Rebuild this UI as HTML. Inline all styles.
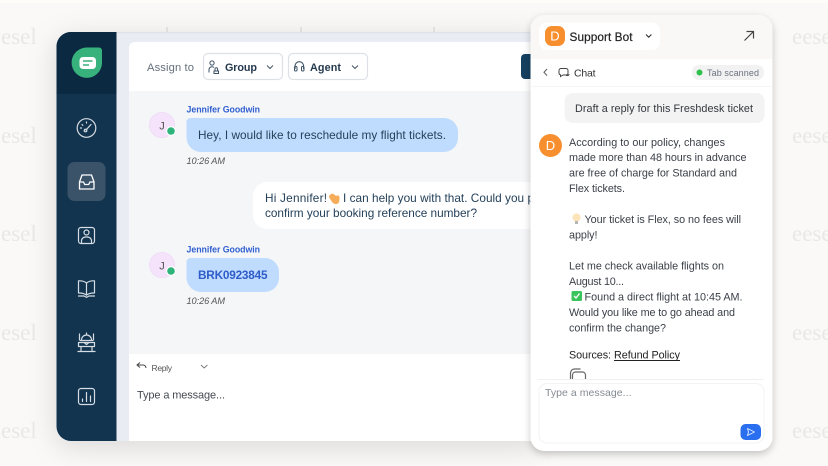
<!DOCTYPE html>
<html><head><meta charset="utf-8"><style>
html,body{margin:0;padding:0;width:828px;height:466px;overflow:hidden;background:#faf9f7}
svg{display:block}
text{font-family:"Liberation Sans",sans-serif;white-space:pre}
.wm{font-family:"Liberation Serif",serif;font-size:23px;fill:#e8e8e6}
.m{font-size:11.800px;fill:#25415a}
.n{font-size:8.800px;fill:#2f5fd0;font-weight:bold}
.t{font-size:9.200px;fill:#555;font-style:italic}
.i{fill:none;stroke:#d5dce3;stroke-width:1.200;stroke-linecap:round;stroke-linejoin:round}
</style></head><body>
<svg width="828" height="466" viewBox="0 0 828 466" xmlns="http://www.w3.org/2000/svg">
<defs>
<filter id="s1" x="-20%" y="-20%" width="140%" height="140%"><feDropShadow dx="0" dy="6" stdDeviation="14" flood-color="#000" flood-opacity=".13"/></filter>
<filter id="s2" x="-20%" y="-20%" width="140%" height="140%"><feDropShadow dx="0" dy="3" stdDeviation="4" flood-color="#000" flood-opacity=".22"/></filter>
<clipPath id="c1"><path d="M129 48a6 6 0 0 1 6-6H540V441H129Z"/></clipPath>
<clipPath id="c2"><rect x="560" y="360" width="40" height="19"/></clipPath>
</defs>
<rect width="828" height="466" fill="#faf9f7"/>
<rect width="828" height="3" fill="#fdfcf8"/>
<g><text class="wm" x="1" y="44">esel</text><text class="wm" x="1" y="143">esel</text><text class="wm" x="1" y="241">esel</text><text class="wm" x="1" y="340">esel</text><text class="wm" x="1" y="438">esel</text>
<text class="wm" x="792" y="44">eese</text><text class="wm" x="792" y="143">eese</text><text class="wm" x="792" y="241">eese</text><text class="wm" x="792" y="340">eese</text><text class="wm" x="792" y="438">eese</text></g>
<path d="M167 27v5M301 27v5M434 27v5" stroke="#dcdcda" stroke-width="1.200"/>

<!-- main card -->
<path d="M70 32H540V441H70a14 14 0 0 1-14-14V46a14 14 0 0 1 14-14Z" fill="#e9edf3" filter="url(#s1)"/>
<rect x="116" y="32" width="424" height="1.200" fill="#dfe2e6"/>
<path d="M71 32H116.500V441H71a14.500 14.500 0 0 1-14.500-14.500V46.500A14.500 14.500 0 0 1 71 32Z" fill="#12344f"/>
<path d="M71 32H116.500V94H56.500V46.500A14.500 14.500 0 0 1 71 32Z" fill="#0b2a42"/>
<g clip-path="url(#c1)">
<rect x="129" y="42" width="411" height="49" fill="#fff"/>
<rect x="129" y="91" width="411" height="263" fill="#f5f6f8"/>
<rect x="129" y="354" width="411" height="87" fill="#fff"/>
</g>
<!-- logo -->
<path d="M87 47.500H99a3 3 0 0 1 3 3V63a15.200 15.200 0 1 1-15-15.500Z" fill="#38b27c"/>
<rect x="79.500" y="57" width="16.500" height="12" rx="3.500" fill="#fff"/>
<path d="M83 61h9.500M83 65h6" stroke="#38b27c" stroke-width="1.500"/>
<!-- gauge -->
<circle cx="86.500" cy="128" r="9.300" class="i"/>
<path class="i" d="M86 130l5-5.500M82 124.500l.8.8M86.500 122v1M80.500 128h1"/><circle cx="85.500" cy="130.500" r="1.300" class="i"/>
<!-- inbox -->
<rect x="67.500" y="162" width="38" height="39" rx="7" fill="#3a5369"/>
<path d="M79.500 182l2.500-7h9.500l2.500 7v7h-14.500Z" fill="none" stroke="#fff" stroke-width="1.300" stroke-linejoin="round"/>
<path d="M79.500 182h4l1.200 2.500h4l1.200-2.500h4" fill="none" stroke="#fff" stroke-width="1.300" stroke-linejoin="round"/>
<!-- contact -->
<rect x="78.500" y="227.500" width="16" height="16" rx="2.500" class="i"/>
<circle cx="86.500" cy="232.500" r="2.500" class="i"/>
<path class="i" d="M81.500 243.500v-3a4 4 0 0 1 4-3.500h2a4 4 0 0 1 4 3.500v3"/>
<!-- book -->
<path class="i" d="M86.500 283c-2-1.800-5-2.300-8-2.200v12.200c3-.1 6 .4 8 2.200 2-1.800 5-2.300 8-2.200v-12.200c-3-.1-6 .4-8 2.200ZM86.500 283v12M78.500 296h5.500l2.500 1.300 2.500-1.300h5.500"/>
<!-- helmet -->
<path class="i" stroke-width="1" d="M81.500 340a5 5 0 0 1 10 0M80.500 340.500h12M79.500 334v6M93.500 334v6M78.500 342.500h16v4h-16ZM81 346.500v4M92 346.500v4M78 351.500h17M84 342.500l2.500 2 2.500-2M86.500 333v2"/>
<!-- chart -->
<rect x="78.500" y="388.500" width="16" height="16" rx="2.500" class="i"/>
<path class="i" d="M82.500 399v2.500M86.500 392.500v9M90.500 396v5.500"/>

<!-- header row -->
<text x="147" y="71" font-size="11.200" fill="#66707c" textLength="47">Assign to</text>
<rect x="203.500" y="53.500" width="79" height="26" rx="4.500" fill="#fff" stroke="#dde1e6" stroke-width="1.200"/>
<circle cx="212" cy="63" r="2.100" fill="none" stroke="#3d5266"/><path d="M209 72.500v-3a3 3 0 0 1 5-2M214 71h4.500v2.500H214ZM215 71v-2a1.300 1.300 0 0 1 2.600 0v2" fill="none" stroke="#3d5266"/>
<text x="225" y="71" font-size="10.800" font-weight="bold" fill="#24394e" textLength="32">Group</text>
<path d="M267 65.500l3 3 3-3" fill="none" stroke="#4a5a6a" stroke-width="1.100"/>
<rect x="288.500" y="53.500" width="79" height="26" rx="4.500" fill="#fff" stroke="#dde1e6" stroke-width="1.200"/>
<path d="M295 69v-3a4.300 4.300 0 0 1 8.600 0v3" fill="none" stroke="#3d5266" stroke-width="1.100"/><rect x="294.500" y="66.500" width="2.500" height="4.500" rx="1" fill="none" stroke="#3d5266"/><rect x="301.500" y="66.500" width="2.500" height="4.500" rx="1" fill="none" stroke="#3d5266"/>
<text x="310" y="71" font-size="10.800" font-weight="bold" fill="#24394e" textLength="31">Agent</text>
<path d="M352 65.500l3 3 3-3" fill="none" stroke="#4a5a6a" stroke-width="1.100"/>
<path d="M525 54H535V79H525a4 4 0 0 1-4-4V58a4 4 0 0 1 4-4Z" fill="#15405f"/>

<!-- messages -->
<circle cx="162" cy="125" r="12.500" fill="#f5e3fb" stroke="#f0dcf6"/>
<text x="162" y="129.500" font-size="11" fill="#555" text-anchor="middle">J</text>
<circle cx="171" cy="131" r="5" fill="#fff"/><circle cx="171" cy="131" r="3.800" fill="#2eb37a"/>
<text class="n" x="186.500" y="112.500" textLength="73.500">Jennifer Goodwin</text>
<path d="M190.500 118H444a14 14 0 0 1 14 14v6a14 14 0 0 1-14 14H201a14.500 14.500 0 0 1-14.500-14.500V122a4 4 0 0 1 4-4Z" fill="#bfdcff"/>
<text class="m" x="198" y="139" textLength="248">Hey, I would like to reschedule my flight tickets.</text>
<text class="t" x="186.500" y="164" textLength="38.500">10:26 AM</text>

<path d="M540 182H267a14 14 0 0 0-14 14V215a14 14 0 0 0 14 14H540Z" fill="#fff"/>
<text class="m" x="265" y="202" textLength="62">Hi Jennifer!</text>
<path d="M331 194c2-1 3 .5 4.500 1.500s2.500-1 3.500.5.500 5.500-.5 7-4.500 1.500-6-.5-3.500-5-3.500-6 1.500-2 2-2.500Z" fill="#f6ad5b"/>
<text class="m" x="343" y="202" textLength="191">I can help you with that. Could you p</text>
<text class="m" x="265" y="217" textLength="212">confirm your booking reference number?</text>

<circle cx="162" cy="265" r="12.500" fill="#f5e3fb" stroke="#f0dcf6"/>
<text x="162" y="269.500" font-size="11" fill="#555" text-anchor="middle">J</text>
<circle cx="171" cy="271" r="5" fill="#fff"/><circle cx="171" cy="271" r="3.800" fill="#2eb37a"/>
<text class="n" x="186.500" y="252.500" textLength="73.500">Jennifer Goodwin</text>
<path d="M190.500 258H265a14 14 0 0 1 14 14v6a14 14 0 0 1-14 14H201a14.500 14.500 0 0 1-14.500-14.500V262a4 4 0 0 1 4-4Z" fill="#bfdcff"/>
<text x="198" y="279" font-size="11.800" font-weight="bold" fill="#2f5cc8" textLength="69.500">BRK0923845</text>
<text class="t" x="186.500" y="304" textLength="38.500">10:26 AM</text>

<!-- reply -->
<path d="M140 362.500l-3 2.500 3 2.500M137 365h6a3 3 0 0 1 3 3" fill="none" stroke="#444" stroke-width="1"/>
<text x="151.500" y="371" font-size="8.500" fill="#555" textLength="20.500">Reply</text>
<path d="M201 365l3.200 3 3.200-3" fill="none" stroke="#777" stroke-width=".9"/>
<text x="137" y="398.500" font-size="11" fill="#454a52" textLength="88">Type a message...</text>

<!-- right panel -->
<rect x="530.500" y="15" width="242" height="436" rx="14" fill="#fff" filter="url(#s2)"/>
<path d="M544.500 15H758.500a14 14 0 0 1 14 14V59H530.500V29a14 14 0 0 1 14-14Z" fill="#f9f8f6"/>
<rect x="539" y="22.500" width="121" height="27.500" rx="8" fill="#fff"/>
<rect x="545" y="26" width="20" height="20" rx="7" fill="#f78f2e"/>
<text x="555" y="40.500" font-size="13" fill="#fff" text-anchor="middle">D</text>
<text x="569.500" y="41" font-size="11.800" fill="#222" stroke="#222" stroke-width=".2" textLength="63">Support Bot</text>
<path d="M646 34.500l2.700 2.700 2.700-2.700" fill="none" stroke="#333" stroke-width="1.100"/>
<path d="M744.500 40.500l9-9M746.500 31.500h7v7" fill="none" stroke="#444" stroke-width="1.200"/>

<path d="M547 69l-3 3.300 3 3.300" fill="none" stroke="#666" stroke-width="1.100"/>
<path d="M561 68.500h5a2 2 0 0 1 2 2v2.500a2 2 0 0 1-2 2h-3l-2.500 1.500v-1.600a2 2 0 0 1-1.500-1.900v-2.500a2 2 0 0 1 2-2Z M566 75.500h1.500a1.500 1.500 0 0 0 1.500-1.500" fill="none" stroke="#444" stroke-width="1"/>
<text x="574" y="76.500" font-size="10.500" fill="#333" textLength="21.500">Chat</text>
<rect x="692" y="65" width="72" height="15" rx="7" fill="#f1f2f1"/>
<circle cx="699.500" cy="72.500" r="3" fill="#2fc04d"/>
<text x="707" y="76" font-size="9" fill="#6b7280" textLength="52">Tab scanned</text>
<rect x="531" y="86" width="241" height="1" fill="#f6f6f6"/>

<rect x="564.500" y="93" width="200" height="30" rx="8" fill="#f3f3f4"/>
<text x="575" y="112" font-size="10.800" fill="#33373d" textLength="178">Draft a reply for this Freshdesk ticket</text>
<circle cx="550.500" cy="145.500" r="11.500" fill="#f78f2e"/>
<text x="550.500" y="150" font-size="13" fill="#fff" text-anchor="middle">D</text>
<g font-size="10.800" fill="#3a3f47">
<text x="569" y="146" textLength="156">According to our policy, changes</text>
<text x="569" y="161" textLength="177.500">made more than 48 hours in advance</text>
<text x="569" y="176.500" textLength="168">are free of charge for Standard and</text>
<text x="569" y="192" textLength="56">Flex tickets.</text>
<text x="584.500" y="223" textLength="156.500">Your ticket is Flex, so no fees will</text>
<text x="569" y="238.500" textLength="28.500">apply!</text>
<text x="569" y="269.500" textLength="155">Let me check available flights on</text>
<text x="569" y="285" textLength="55">August 10...</text>
<text x="584.500" y="300.500" textLength="158">Found a direct flight at 10:45 AM.</text>
<text x="569" y="316" textLength="166">Would you like me to go ahead and</text>
<text x="569" y="331.500" textLength="97">confirm the change?</text>
<text x="569" y="358.500" fill="#222" textLength="42">Sources:</text>
<text x="614" y="358.500" fill="#222" textLength="66">Refund Policy</text>
</g>
<rect x="614" y="360" width="66" height="1" fill="#222"/>
<circle cx="576.500" cy="217.500" r="4" fill="#fde3b8"/><rect x="575" y="221" width="3" height="3" fill="#b5b5b5"/>
<rect x="571.500" y="291" width="10.500" height="10" rx="1.500" fill="#3cc45c"/>
<path d="M574 296l2 2 3.500-4.500" fill="none" stroke="#fff" stroke-width="1.300"/>
<g clip-path="url(#c2)" fill="none" stroke="#666" stroke-width="1.200"><rect x="572.500" y="372" width="13" height="13" rx="3"/><path d="M570.500 381v-8a4 4 0 0 1 4-4h6"/></g>
<rect x="538" y="379" width="226" height="1" fill="#f0f0f0"/>
<rect x="539" y="383.500" width="225" height="59.500" rx="8" fill="#fff" stroke="#f3f3f3"/>
<text x="545" y="396" font-size="10.500" fill="#858a92" textLength="86.500">Type a message...</text>
<rect x="740.500" y="424" width="20.500" height="16" rx="5" fill="#2a6ff0"/>
<path d="M747.500 428.500l7 3.500-7 3.500 1-3.500Z" fill="none" stroke="#e6efff" stroke-width=".9" stroke-linejoin="round"/>
</svg>
</body></html>
